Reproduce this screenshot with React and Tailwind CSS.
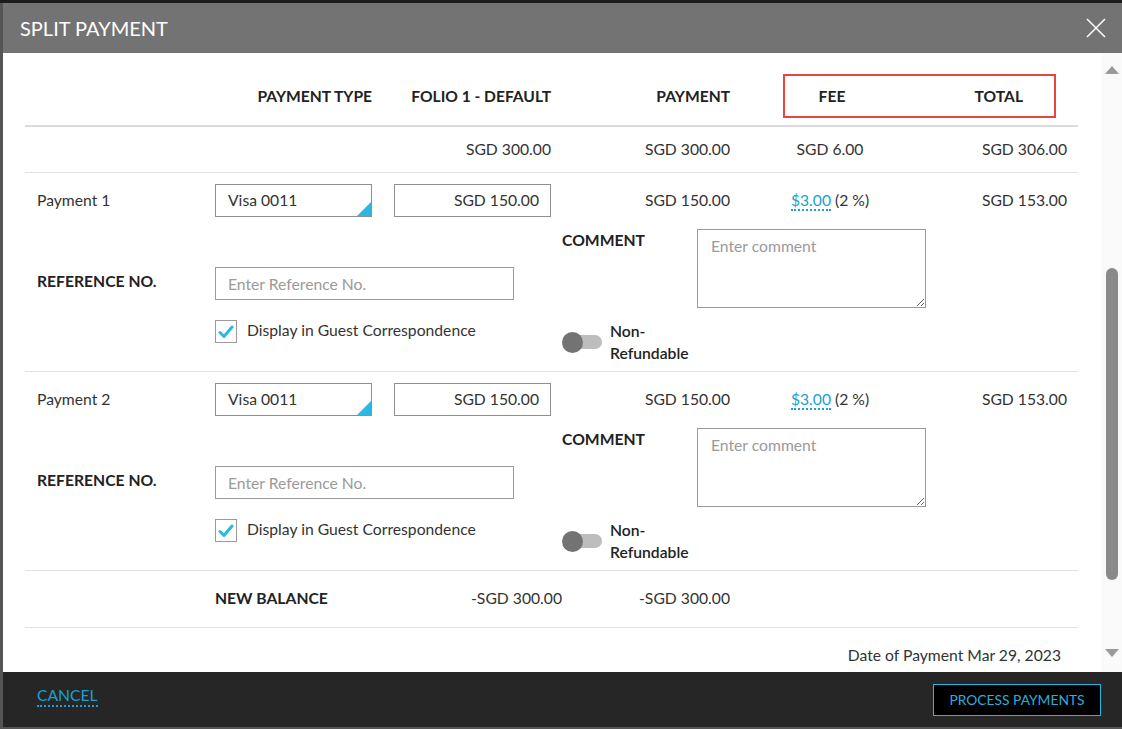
import React from "react";

const font = { fontFamily: "Lato, 'Open Sans', sans-serif" };

const HeaderRow = () => (
  <div className="flex items-end h-[74px] pb-[7px] border-b-2 border-[#dcdcdc] text-[15.6px] font-bold text-[#222]">
    <div className="w-[190px]" />
    <div className="w-[157px] h-[44px] pt-[2px] flex items-center justify-end">PAYMENT TYPE</div>
    <div className="w-[22px]" />
    <div className="w-[157px] h-[44px] pt-[2px] flex items-center justify-end">FOLIO 1 - DEFAULT</div>
    <div className="w-[179px] h-[44px] pt-[2px] flex items-center justify-end">PAYMENT</div>
    <div className="ml-[53px] w-[273px] h-[44px] pt-[2px] flex items-center border-2 border-[#e8453c]">
      <div className="w-[94px] text-center">FEE</div>
      <div className="flex-1 text-right pr-[31px]">TOTAL</div>
    </div>
  </div>
);

const TotalsRow = () => (
  <div className="flex items-center h-[46px] border-b border-[#e2e2e2] text-[15.7px] text-[#333]">
    <div className="w-[190px]" />
    <div className="w-[157px]" />
    <div className="w-[22px]" />
    <div className="w-[157px] text-right">SGD 300.00</div>
    <div className="w-[179px] text-right">SGD 300.00</div>
    <div className="w-[200px] text-center">SGD 6.00</div>
    <div className="w-[137px] text-right">SGD 306.00</div>
  </div>
);

const Check = () => (
  <span className="w-[22px] h-[23px] border border-[#9a9a9a] bg-white flex items-center justify-center shrink-0">
    <svg width="16" height="14" viewBox="0 0 16 14">
      <path d="M2 7.5 L6 11.5 L14 2" fill="none" stroke="#2db7e2" strokeWidth="3" strokeLinecap="round" strokeLinejoin="round" />
    </svg>
  </span>
);

const Toggle = () => (
  <span className="relative w-[40px] h-[20px] flex items-center shrink-0">
    <span className="absolute left-[9px] right-0 h-[14px] rounded-full bg-[#bdbdbd]" />
    <span className="absolute left-0 w-[21px] h-[21px] rounded-full bg-[#737373]" />
  </span>
);

const PaymentBlock = ({ label }) => (
  <div className="border-b border-[#e2e2e2] pt-[11px] pb-[7px] text-[15.7px] text-[#333]">
    <div className="flex items-center h-[33px]">
      <div className="w-[190px] pl-[12px] pt-[1px]">{label}</div>
      <div className="relative w-[157px] h-[33px] border border-[#8f8f8f] flex items-center pl-[12px]">
        Visa 0011
        <svg className="absolute right-0 bottom-0" width="14" height="14" viewBox="0 0 14 14">
          <path d="M14 0 L14 14 L0 14 Z" fill="#2db7e2" />
        </svg>
      </div>
      <div className="w-[22px]" />
      <div className="w-[157px] h-[33px] border border-[#8f8f8f] flex items-center justify-end pr-[11px]">SGD 150.00</div>
      <div className="w-[179px] text-right">SGD 150.00</div>
      <div className="w-[200px] flex justify-center">
        <span>
          <span className="text-[#1ba1cf] border-b-2 border-dotted border-[#1ba1cf]">$3.00</span> (2 %)
        </span>
      </div>
      <div className="w-[137px] text-right">SGD 153.00</div>
    </div>
    <div className="flex">
      <div className="w-[537px] pt-[50px]">
        <div className="flex items-center h-[33px]">
          <div className="w-[190px] pl-[12px] pb-[3px] font-bold text-[#222]">REFERENCE NO.</div>
          <input
            placeholder="Enter Reference No."
            className="w-[299px] h-[33px] border border-[#9a9a9a] px-[12px] text-[15.7px] placeholder:text-[#9a9a9a] outline-none"
            style={font}
          />
        </div>
        <div className="flex items-start mt-[20px] pl-[190px] gap-[10px]">
          <Check />
          <span className="leading-[20px]">Display in Guest Correspondence</span>
        </div>
      </div>
      <div className="pt-[12px]">
        <div className="flex items-start">
          <div className="w-[135px] pt-[1px] leading-[20px] font-bold text-[#222]">COMMENT</div>
          <textarea
            placeholder="Enter comment"
            className="w-[229px] h-[79px] border border-[#9a9a9a] px-[13px] py-[6px] text-[15.7px] leading-[20px] placeholder:text-[#9a9a9a] outline-none"
            style={font}
          />
        </div>
        <div className="flex items-center mt-[12px] gap-[8px]">
          <Toggle />
          <span className="leading-[22px] font-semibold text-[#222]">
            Non-
            <br />
            Refundable
          </span>
        </div>
      </div>
    </div>
  </div>
);

const BalanceRow = () => (
  <div className="flex items-center h-[57px] border-b border-[#e2e2e2] text-[15.7px] text-[#333]">
    <div className="w-[190px]" />
    <div className="w-[179px] font-bold text-[#222]">NEW BALANCE</div>
    <div className="w-[168px] text-right">-SGD 300.00</div>
    <div className="w-[168px] text-right">-SGD 300.00</div>
  </div>
);

const Scrollbar = () => (
  <div className="w-[21px] bg-[#fafafa] flex flex-col items-center pt-[13px] pb-[15px]">
    <svg width="14" height="8" viewBox="0 0 14 8">
      <path d="M0 8 L7 0 L14 8 Z" fill="#9a9a9a" />
    </svg>
    <div className="h-[194px]" />
    <div className="w-[12px] h-[312px] rounded-full bg-[#8a8a8a]" />
    <div className="flex-1" />
    <svg width="14" height="8" viewBox="0 0 14 8">
      <path d="M0 0 L14 0 L7 8 Z" fill="#9a9a9a" />
    </svg>
  </div>
);

export default function App() {
  return (
    <div className="w-[1122px] h-[729px] bg-[#555] flex flex-col overflow-hidden" style={font}>
      <div className="h-[3px] bg-[#1c1c1c]" />
      <div className="flex flex-1">
        <div className="w-[3px]" />
        <div className="flex-1 flex flex-col">
          <div className="h-[50px] bg-[#737373] flex items-center justify-between pl-[17px] pr-[16px]">
            <span className="text-[20px] text-white">SPLIT PAYMENT</span>
            <svg width="20" height="20" viewBox="0 0 20 20">
              <path d="M1 1 L19 19 M19 1 L1 19" stroke="white" strokeWidth="1.5" />
            </svg>
          </div>
          <div className="h-[619px] bg-white flex">
            <div className="flex-1 pl-[22px] pr-[23px]">
              <HeaderRow />
              <TotalsRow />
              <PaymentBlock label="Payment 1" />
              <PaymentBlock label="Payment 2" />
              <BalanceRow />
              <div className="pt-[17px] pr-[17px] text-right text-[15.7px] leading-[20px] text-[#333]">
                Date of Payment Mar 29, 2023
              </div>
            </div>
            <Scrollbar />
          </div>
          <div className="h-[55px] bg-[#262626] flex items-start justify-between pl-[34px] pr-[21px] pt-[12px]">
            <span className="mt-[1px] text-[15.7px] text-[#1ba1cf] border-b-2 border-dotted border-[#1ba1cf] leading-[20px]">
              CANCEL
            </span>
            <button className="h-[32px] w-[168px] border border-[#1fb8e0] bg-black text-[13.8px] text-[#2aaedc]" style={font}>
              PROCESS PAYMENTS
            </button>
          </div>
        </div>
      </div>
    </div>
  );
}
